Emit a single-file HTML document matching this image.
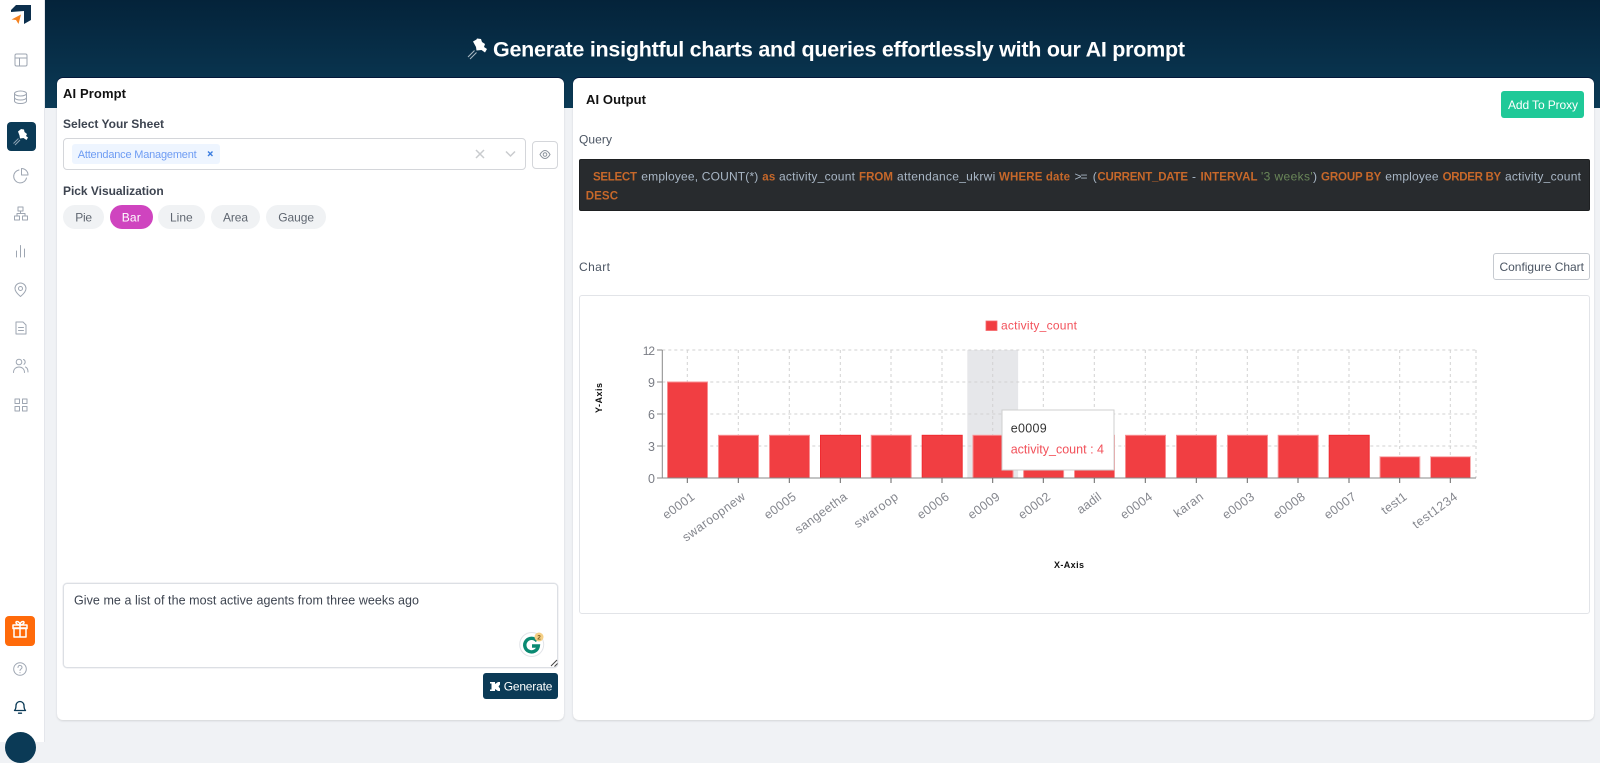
<!DOCTYPE html>
<html lang="en"><head><meta charset="utf-8"><title>AI Prompt</title>
<style>
html,body{margin:0;padding:0;width:1600px;height:742px;overflow:hidden;background:#f0f2f5;font-family:"Liberation Sans",sans-serif}
div{position:absolute;box-sizing:border-box}
svg{position:absolute;left:0;top:0}
text{font-family:"Liberation Sans",sans-serif}
</style></head><body>
<div style="left:0;top:0;width:45px;height:742px;background:#fff;border-right:1px solid #e4e6eb"></div>
<div style="left:45px;top:0;width:1555px;height:108px;background:linear-gradient(180deg,#04233a 0%,#0b3a56 100%)"></div>
<div style="left:57px;top:78px;width:507px;height:642px;background:#fff;border-radius:6px;box-shadow:0 -1px 0 #04183a,0 1px 2px rgba(0,0,0,.12)"></div>
<div style="left:573px;top:78px;width:1021px;height:642px;background:#fff;border-radius:6px;box-shadow:0 -1px 0 #04183a,0 1px 2px rgba(0,0,0,.12)"></div>
<div style="left:63px;top:138px;width:463px;height:32px;border:1px solid #d4d6da;border-radius:4px"></div>
<div style="left:72px;top:144px;width:148px;height:20px;background:#eef5ff;border-radius:3px"></div>
<div style="left:532px;top:141px;width:26px;height:28px;border:1px solid #d4d6da;border-radius:4px"></div>
<div style="left:63px;top:205px;width:41px;height:24px;background:#f0f2f4;border-radius:12px"></div>
<div style="left:110px;top:205px;width:43px;height:24px;background:#cf44bf;border-radius:12px"></div>
<div style="left:158px;top:205px;width:47px;height:24px;background:#f0f2f4;border-radius:12px"></div>
<div style="left:211px;top:205px;width:49px;height:24px;background:#f0f2f4;border-radius:12px"></div>
<div style="left:266px;top:205px;width:60px;height:24px;background:#f0f2f4;border-radius:12px"></div>
<div style="left:63px;top:583px;width:495px;height:85px;border:1px solid #dcdfe4;border-radius:4px;box-shadow:0 0 0 .5px #e8eaee"></div>
<div style="left:483px;top:673px;width:75px;height:26px;background:#0b3a56;border-radius:3px"></div>
<div style="left:579px;top:159px;width:1011px;height:52px;background:#282b2e;border-radius:2px;border:1px solid #1e2022"></div>
<div style="left:1501px;top:91px;width:83px;height:27px;background:#1fc998;border-radius:3px"></div>
<div style="left:1493px;top:253px;width:97px;height:27px;background:#fff;border:1px solid #c6cad0;border-radius:3px"></div>
<div style="left:579px;top:295px;width:1011px;height:319px;border:1px solid #e2e4e8;border-radius:3px"></div>
<div style="left:5px;top:616px;width:30px;height:30px;background:#ff6a0a;border-radius:4px"></div>
<div style="left:7px;top:122px;width:29px;height:29px;background:#0b3a56;border-radius:4px"></div>
<div style="left:5px;top:732px;width:31px;height:31px;background:#0b3a56;border-radius:50%"></div>

<svg width="1600" height="742" viewBox="0 0 1600 742" xmlns="http://www.w3.org/2000/svg">
<!-- logo -->
<path d="M16 5H31V20L24 24V11L11 12V10Z" fill="#0c2f4d"/>
<path d="M11.500 19.500L21 14.500L18.500 24L16 20Z" fill="#f5821f"/>
<!-- sidebar icons -->
<g fill="none" stroke="#9ea6b2" stroke-width="1" stroke-linecap="round" stroke-linejoin="round">
<rect x="15" y="54" width="12" height="12" rx="1.500"/><path d="M15 58H27M19.500 58V66"/>
<ellipse cx="20.500" cy="93.500" rx="6" ry="2.500"/><path d="M14.500 93.500V101c0 1.400 2.700 2.500 6 2.500s6-1.100 6-2.500V93.500M14.500 97.500c0 1.400 2.700 2.500 6 2.500s6-1.100 6-2.500"/>
<path d="M26.500 178a6.500 6.500 0 1 1-7.500-8"/><path d="M21.500 168.500a6.500 6.500 0 0 1 6.500 6.500H21.500Z"/>
<rect x="18" y="207" width="5" height="4"/><rect x="14.500" y="216" width="5" height="4"/><rect x="22.500" y="216" width="5" height="4"/><path d="M20.500 211V213.500M17 216V213.500H25V216"/>
<path d="M16.500 257V251M20.500 257V245.500M24.500 257V249"/>
<path d="M20.500 296.500c-3-2.500-5.500-5-5.500-8a5.500 5.500 0 0 1 11 0c0 3-2.500 5.500-5.500 8Z"/><circle cx="20.500" cy="288.500" r="2"/>
<path d="M16 322H23L26 325V334H16ZM18.500 327.500H23.500M18.500 330.500H23.500"/>
<circle cx="19" cy="362" r="2.800"/><path d="M13.500 372.500c0-3.500 2.500-5.500 5.500-5.500s5.500 2 5.500 5.500M23.500 359.500c1.800.5 2.400 3.500.5 4.800M25.500 367c1.500.7 2.500 2.500 2.500 5"/>
<rect x="15" y="399" width="4.500" height="4.500"/><rect x="22.500" y="399" width="4.500" height="4.500"/><rect x="15" y="406.500" width="4.500" height="4.500"/><rect x="22.500" y="406.500" width="4.500" height="4.500"/>
<circle cx="20" cy="669" r="6.300"/><path d="M18 667.500c0-3 4.200-2.500 4 0 0 1.500-2 1.500-2 3"/><path d="M20 672.500V672.700"/>
</g>
<!-- active wand -->
<path d="M18 131.500L20.500 129.500L21 129L24 129.500L24.500 132L27 134L26 136L28 137.500L26.500 140L23.500 138L20 138.500L19.500 135.500Z" fill="#fff"/>
<path d="M18.500 138.500L13.500 143.500M20 140L15 145" stroke="#8ea4b4" stroke-width="1" fill="none"/>
<!-- gift -->
<g fill="none" stroke="#fff" stroke-width="1.500" stroke-linejoin="round"><rect x="14" y="628" width="12" height="9"/><rect x="13" y="625" width="14" height="3.500"/><path d="M20 625V637M20 625c-4 0-5-3.500-3-3.500s3 2 3 3.500c0-1.500 1-3.500 3-3.500s1 3.500-3 3.500Z"/></g>
<!-- bell -->
<g fill="none" stroke="#0b3a56" stroke-width="1.300" stroke-linejoin="round" stroke-linecap="round"><path d="M14.500 710.500c1.500-1.500 1.500-3 1.500-5a4 4 0 0 1 8 0c0 2 0 3.500 1.500 5ZM18.500 713.200H21.500"/></g>

<!-- title -->
<path d="M473 41.500L476.500 39.500L477 38.500L481 39L482 42L485 44L484 47L487 49L485 52.500L481.500 50L476.500 50.500L476 47Z" fill="#fff"/>
<path d="M474.500 50.500L468 57M476.500 52.500L470 59" stroke="#a9b7c2" stroke-width="1.100" fill="none"/>
<text x="493" y="56.500" font-size="21.500" font-weight="700" fill="#fff" textLength="692">Generate insightful charts and queries effortlessly with our AI prompt</text>

<!-- left panel -->
<text x="63" y="98" font-size="13" font-weight="700" fill="#111" textLength="63">AI Prompt</text>
<text x="63" y="128" font-size="12" font-weight="700" fill="#3d4450" textLength="101">Select Your Sheet</text>
<text x="77.700" y="158" font-size="11" fill="#6e9cf3" textLength="119">Attendance Management</text>
<path d="M208 151.500L212.500 156M212.500 151.500L208 156" stroke="#3b7de0" stroke-width="1.400"/>
<path d="M476 150L484 158M484 150L476 158" stroke="#c9cbce" stroke-width="1.500"/>
<path d="M506 151.500L510.500 156L515 151.500" stroke="#c9cbce" stroke-width="1.500" fill="none"/>
<path d="M540 154.500c2-3.500 4-4 5-4s3 .5 5 4c-2 3.500-4 4-5 4s-3-.5-5-4Z" fill="none" stroke="#8a929c" stroke-width="1"/><circle cx="545" cy="154.500" r="1.800" fill="none" stroke="#8a929c"/>
<text x="63" y="195" font-size="12" font-weight="700" fill="#3d4450" textLength="100.700">Pick Visualization</text>
<text x="75.300" y="221.500" font-size="12" fill="#5f6670" textLength="16.700">Pie</text>
<text x="121.700" y="221.500" font-size="12" fill="#fff" textLength="19">Bar</text>
<text x="170" y="221.500" font-size="12" fill="#5f6670" textLength="22.700">Line</text>
<text x="223" y="221.500" font-size="12" fill="#5f6670" textLength="25">Area</text>
<text x="278.300" y="221.500" font-size="12" fill="#5f6670" textLength="35.700">Gauge</text>
<text x="74" y="604.500" font-size="12.500" fill="#3d4450" textLength="345">Give me a list of the most active agents from three weeks ago</text>
<circle cx="531.700" cy="644.500" r="12" fill="#fff" stroke="#e2e4e8"/>
<path d="M537 641a6.800 6.800 0 1 0 1.300 5H532" fill="none" stroke="#0a8a72" stroke-width="3.400"/>
<circle cx="539" cy="637" r="4.500" fill="#f5cf85"/>
<text x="539" y="639.500" font-size="6.500" font-weight="700" fill="#7a5a1c" text-anchor="middle">2</text>
<path d="M551 666L557 660M554.500 666.500L557.500 663.500" stroke="#444" stroke-width="1"/>
<path d="M490 682H495V684L498 682H500V684.500L498.500 686.500L500 688.500V691H498L495 689V691H490V689.500H491.500V683.500H490Z" fill="#fff"/>
<text x="503.700" y="690.500" font-size="12" fill="#fff" textLength="48.700">Generate</text>

<!-- right panel -->
<text x="586" y="104" font-size="13" font-weight="700" fill="#111" textLength="60">AI Output</text>
<text x="1508" y="109" font-size="12" fill="#fff" textLength="70">Add To Proxy</text>
<text x="579" y="143.500" font-size="12" fill="#4b5563" textLength="33">Query</text>
<text x="579" y="271" font-size="12" fill="#4b5563" textLength="31">Chart</text>
<text x="1499.500" y="271" font-size="12" fill="#4b5563" textLength="84.500">Configure Chart</text>

<g font-size="12" fill="#a9b7c6">
<g font-size="11.500" font-weight="700" fill="#c7682a">
<text x="593" y="180.500" textLength="44">SELECT</text>
<text x="762.300" y="180.500" textLength="13">as</text>
<text x="859" y="180.500" textLength="34">FROM</text>
<text x="999" y="180.500" textLength="71">WHERE date</text>
<text x="1097.400" y="180.500" textLength="90.600">CURRENT_DATE</text>
<text x="1200.500" y="180.500" textLength="57">INTERVAL</text>
<text x="1321" y="180.500" textLength="60.300">GROUP BY</text>
<text x="1442.600" y="180.500" textLength="58.600">ORDER BY</text>
<text x="585.700" y="199.500" textLength="32.300">DESC</text>
</g>
<text x="641.300" y="180.500" textLength="117">employee, COUNT(*)</text>
<text x="779" y="180.500" textLength="76">activity_count</text>
<text x="897" y="180.500" textLength="98.300">attendance_ukrwi</text>
<text x="1074.500" y="180.500" textLength="13">&gt;=</text>
<text x="1092.700" y="180.500">(</text>
<text x="1192" y="180.500">-</text>
<text x="1261" y="180.500" fill="#6a8759" textLength="51.700">'3 weeks'</text>
<text x="1313" y="180.500">)</text>
<text x="1385.300" y="180.500" textLength="53.300">employee</text>
<text x="1505" y="180.500" textLength="76">activity_count</text>
</g>

<!-- chart -->
<g transform="translate(0 -1)">
<rect x="986" y="322" width="11" height="9.500" fill="#f13e42" stroke="#f5686b" stroke-width=".8"/>
<text x="1001" y="330.500" font-size="12" fill="#f2515a" textLength="76">activity_count</text>
<rect x="967.300" y="351" width="50.800" height="128" fill="#e6e7ea"/>
<path d="M662.300 351H1476M662.300 383H1476M662.300 415H1476M662.300 447H1476M687.300 351V479M738.300 351V479M789.300 351V479M840.300 351V479M891 351V479M942 351V479M992.700 351V479M1043.300 351V479M1094.300 351V479M1145.300 351V479M1196.300 351V479M1247.300 351V479M1298 351V479M1349 351V479M1399.700 351V479M1450.300 351V479M1476 351V479" stroke="#d2d2d2" stroke-width="1" stroke-dasharray="3 3" fill="none"/>
<g fill="#f13e42" stroke-width="1">
<rect x="667.500" y="383" width="40" height="96" stroke="#f88f92"/>
<rect x="718.500" y="436.300" width="40" height="42.700" stroke="#f88f92"/>
<rect x="769.500" y="436.300" width="40" height="42.700" stroke="#f88f92"/>
<rect x="820.500" y="436.300" width="40" height="42.700" stroke="#f02a30"/>
<rect x="871.200" y="436.300" width="40" height="42.700" stroke="#f88f92"/>
<rect x="922.200" y="436.300" width="40" height="42.700" stroke="#f02a30"/>
<rect x="973" y="436.300" width="40" height="42.700" stroke="#f88f92"/>
<rect x="1023.600" y="436.300" width="40" height="42.700" stroke="#f88f92"/>
<rect x="1074.500" y="436.300" width="40" height="42.700" stroke="#f88f92"/>
<rect x="1125.500" y="436.300" width="40" height="42.700" stroke="#f88f92"/>
<rect x="1176.500" y="436.300" width="40" height="42.700" stroke="#f88f92"/>
<rect x="1227.500" y="436.300" width="40" height="42.700" stroke="#f88f92"/>
<rect x="1278.200" y="436.300" width="40" height="42.700" stroke="#f88f92"/>
<rect x="1329.200" y="436.300" width="40" height="42.700" stroke="#f02a30"/>
<rect x="1379.900" y="457.700" width="40" height="21.300" stroke="#f8b0b2"/>
<rect x="1430.500" y="457.700" width="40" height="21.300" stroke="#f8b0b2"/>
</g>
<path d="M662.300 351V479M657 351H662.300M657 383H662.300M657 415H662.300M657 447H662.300M657 479H1476" stroke="#888" stroke-width="1" fill="none"/>
<path d="M687.300 479V484M738.300 479V484M789.300 479V484M840.300 479V484M891 479V484M942 479V484M992.700 479V484M1043.300 479V484M1094.300 479V484M1145.300 479V484M1196.300 479V484M1247.300 479V484M1298 479V484M1349 479V484M1399.700 479V484M1450.300 479V484" stroke="#666" stroke-width="1"/>
<g font-size="12.500" fill="#7a7d85" text-anchor="end">
<text x="655" y="356" font-size="12" textLength="12.300">12</text>
<text x="655" y="388">9</text>
<text x="655" y="420">6</text>
<text x="655" y="452">3</text>
<text x="655" y="484">0</text>
</g>
<g font-size="12.500" fill="#85878e" text-anchor="end">
<text transform="translate(695.500 499.500) rotate(-36)" textLength="36">e0001</text>
<text transform="translate(746 499.500) rotate(-36)" textLength="74">swaroopnew</text>
<text transform="translate(797 499.500) rotate(-36)" textLength="36">e0005</text>
<text transform="translate(848 499.500) rotate(-36)" textLength="61">sangeetha</text>
<text transform="translate(899 499.500) rotate(-36)" textLength="51">swaroop</text>
<text transform="translate(950 499.500) rotate(-36)" textLength="36">e0006</text>
<text transform="translate(1000.700 499.500) rotate(-36)" textLength="36">e0009</text>
<text transform="translate(1051.300 499.500) rotate(-36)" textLength="36">e0002</text>
<text transform="translate(1102.300 499.500) rotate(-36)" textLength="27">aadil</text>
<text transform="translate(1153.300 499.500) rotate(-36)" textLength="36">e0004</text>
<text transform="translate(1204.300 499.500) rotate(-36)" textLength="33">karan</text>
<text transform="translate(1255.300 499.500) rotate(-36)" textLength="36">e0003</text>
<text transform="translate(1306 499.500) rotate(-36)" textLength="36">e0008</text>
<text transform="translate(1357 499.500) rotate(-36)" textLength="36">e0007</text>
<text transform="translate(1407.700 499.500) rotate(-36)" textLength="28">test1</text>
<text transform="translate(1458.300 499.500) rotate(-36)" textLength="52">test1234</text>
</g>
<text transform="translate(602 414) rotate(-90)" font-size="9" font-weight="700" fill="#111" textLength="30">Y-Axis</text>
<text x="1054" y="569" font-size="9" font-weight="700" fill="#111" textLength="30">X-Axis</text>
<rect x="1002" y="411" width="112" height="60" fill="#fff" stroke="#cfcfcf" stroke-width="1"/>
<text x="1010.700" y="433.500" font-size="12.500" fill="#333" textLength="36">e0009</text>
<text x="1010.700" y="454.500" font-size="12.500" fill="#f2515a" textLength="93.300">activity_count : 4</text>
</g>
</svg>
</body></html>
